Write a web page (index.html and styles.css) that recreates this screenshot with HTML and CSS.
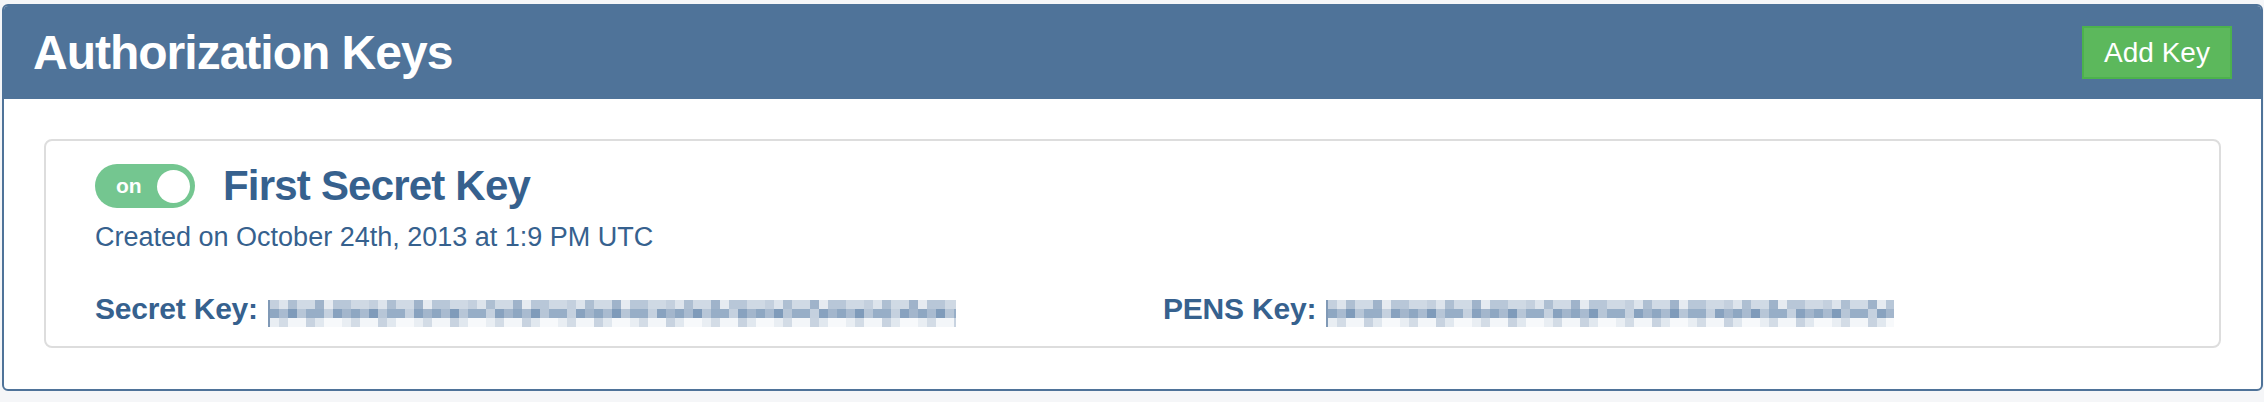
FILE: index.html
```html
<!DOCTYPE html>
<html lang="en">
<head>
    <meta charset="UTF-8">
    <meta name="viewport" content="width=device-width, initial-scale=1.0">
    <title>Authorization Keys</title>
    <link rel="stylesheet" href="styles.css">
</head>
<body>
    <div class="panel">
        <div class="panel-heading">
            <h1>Authorization Keys</h1>
            <button class="btn-add">Add Key</button>
        </div>
        <div class="panel-body">
            <div class="key-card">
                <div class="key-title">
                    <span class="toggle on">
                        <span class="toggle-label">on</span>
                        <span class="toggle-knob"></span>
                    </span>
                    <h2>First Secret Key</h2>
                </div>
                <p class="created">Created on October 24th, 2013 at 1:9 PM UTC</p>
                <div class="key-values">
                    <div class="key-value">
                        <strong>Secret Key:</strong>
                        <span class="blurred secret"></span>
                    </div>
                    <div class="key-value">
                        <strong>PENS Key:</strong>
                        <span class="blurred pens"></span>
                    </div>
                </div>
            </div>
        </div>
    </div>
</body>
</html>
```

FILE: styles.css
```css
body {
    margin: 4px 1px 0 2px;
    font-family: "Liberation Sans", Arial, sans-serif;
    background-color: #f5f6f8;
    color: #36618e;
}
.panel {
    border: 2px solid #4f7399;
    border-radius: 6px;
    background: #fff;
    overflow: hidden;
}
.panel-heading {
    display: flex;
    align-items: center;
    justify-content: space-between;
    height: 93px;
    padding: 0 29px 0 29px;
    background-color: #4f7399;
}
.panel-heading h1 {
    margin: 0;
    color: #fff;
    font-size: 48px;
    font-weight: bold;
    letter-spacing: -1px;
}
.btn-add {
    width: 150px;
    height: 53px;
    padding: 0;
    background-color: #5cb85c;
    border: 2px solid #4cb24c;
    color: #fff;
    font-family: "Liberation Sans", Arial, sans-serif;
    font-size: 28px;
    cursor: pointer;
}
.panel-body {
    padding: 40px 40px 41px 40px;
}
.key-card {
    border: 2px solid #dddddd;
    border-radius: 8px;
    padding: 23px 49px 19px 49px;
}
.key-title {
    display: flex;
    align-items: center;
    gap: 28px;
}
.key-title h2 {
    margin: 0;
    font-size: 42px;
    line-height: 44px;
    letter-spacing: -0.8px;
    font-weight: bold;
}
.toggle {
    display: flex;
    align-items: center;
    justify-content: space-between;
    box-sizing: border-box;
    width: 100px;
    height: 44px;
    padding: 0 5px 0 21px;
    border-radius: 22px;
    background-color: #74c690;
}
.toggle-label {
    color: #fff;
    font-size: 21px;
    font-weight: bold;
}
.toggle-knob {
    width: 33px;
    height: 33px;
    border-radius: 50%;
    background: #fff;
}
.created {
    margin: 13px 0 0 0;
    font-size: 27px;
    line-height: 32px;
}
.key-values {
    display: grid;
    grid-template-columns: 1068px 1fr;
    margin-top: 38px;
}
.key-value {
    display: flex;
    align-items: flex-end;
    gap: 10px;
    height: 36px;
}
.key-value strong {
    font-size: 30px;
    line-height: 36px;
    letter-spacing: -0.2px;
}
/* pixelated placeholder for the hidden key values, one layer per row of blocks */
.blurred {
    display: inline-block;
    height: 27px;
    border-left: 2px solid #8099b6;
    background-color: #e4eaf1;
    background-repeat: no-repeat;
    background-size: 100% 9px;
    background-position: 0 0, 0 9px, 0 18px;
    background-image:
        repeating-linear-gradient(90deg, #c4d0de 0 9px, #dde4ec 9px 18px, #aebfd2 18px 27px, #d0dae5 27px 45px, #9fb3ca 45px 54px, #e6ebf1 54px 63px, #b8c7d8 63px 81px, #cfd9e4 81px 99px),
        repeating-linear-gradient(90deg, #8ea7c2 0 9px, #a9bbd0 9px 18px, #7f9bba 18px 27px, #b7c6d7 27px 36px, #97aec7 36px 54px, #c5d1df 54px 63px, #88a2bf 63px 72px, #a3b6cc 72px 81px),
        repeating-linear-gradient(90deg, #e9eef3 0 9px, #d3dce6 9px 18px, #f3f6f9 18px 36px, #c8d3e0 36px 45px, #e1e8ef 45px 54px, #f7f9fb 54px 72px);
}
.blurred.secret {
    width: 686px;
}
.blurred.pens {
    width: 566px;
}
```
